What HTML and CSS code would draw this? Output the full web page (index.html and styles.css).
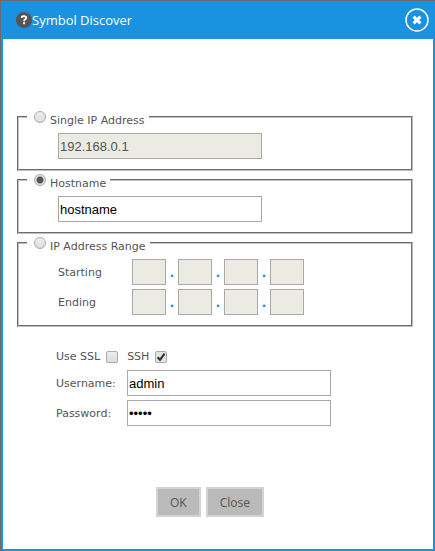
FILE: index.html
```html
<!DOCTYPE html>
<html lang="en">

<head>
    <meta charset="UTF-8">
    <meta name="viewport" content="width=device-width, initial-scale=1.0">
    <title>Symbol Discover</title>
    <link rel="stylesheet" href="styles.css">
</head>

<body>
    <div class="dialog">
        <div class="title-bar">
            <svg class="help" viewBox="0 0 16 16" aria-hidden="true">
                <circle cx="8" cy="8" r="8" fill="#555" />
                <path d="M5.8 6.1V5.4Q5.8 4.1 8 4.1Q10.2 4.1 10.2 5.8Q10.2 6.9 8.9 7.5Q8.1 7.9 8.1 9.2" fill="none" stroke="#fff" stroke-width="1.9" />
                <path d="M7.1 10.2h2v2h-2z" fill="#fff" />
            </svg>
            <h1>Symbol Discover</h1>
            <button type="button" class="close" aria-label="Close dialog">
                <svg viewBox="0 0 24 24" aria-hidden="true">
                    <circle cx="12" cy="12" r="11" fill="none" stroke="#fff" stroke-width="1.5" />
                    <path d="M8.6 8.6l6.8 6.8M15.4 8.6l-6.8 6.8" fill="none" stroke="#fff" stroke-width="3" />
                </svg>
            </button>
        </div>

        <form class="content">
            <fieldset>
                <legend>
                    <input type="radio" name="mode" id="single">
                    <label for="single">Single IP Address</label>
                </legend>
                <input type="text" class="text" value="192.168.0.1" aria-label="Single IP Address" disabled>
            </fieldset>

            <fieldset>
                <legend>
                    <input type="radio" name="mode" id="host" checked>
                    <label for="host">Hostname</label>
                </legend>
                <input type="text" class="text" value="hostname" aria-label="Hostname">
            </fieldset>

            <fieldset>
                <legend>
                    <input type="radio" name="mode" id="range">
                    <label for="range">IP Address Range</label>
                </legend>
                <div class="range">
                    <div class="range-row">
                        <label for="start1">Starting</label>
                        <input type="text" class="text octet" id="start1" disabled>
                        <span class="dot">.</span>
                        <input type="text" class="text octet" aria-label="Starting 2" disabled>
                        <span class="dot">.</span>
                        <input type="text" class="text octet" aria-label="Starting 3" disabled>
                        <span class="dot">.</span>
                        <input type="text" class="text octet" aria-label="Starting 4" disabled>
                    </div>
                    <div class="range-row">
                        <label for="end1">Ending</label>
                        <input type="text" class="text octet" id="end1" disabled>
                        <span class="dot">.</span>
                        <input type="text" class="text octet" aria-label="Ending 2" disabled>
                        <span class="dot">.</span>
                        <input type="text" class="text octet" aria-label="Ending 3" disabled>
                        <span class="dot">.</span>
                        <input type="text" class="text octet" aria-label="Ending 4" disabled>
                    </div>
                </div>
            </fieldset>

            <div class="login">
                <div class="checks">
                    <label for="ssl">Use SSL</label>
                    <input type="checkbox" id="ssl">
                    <label for="ssh" class="ssh">SSH</label>
                    <input type="checkbox" id="ssh" checked>
                </div>
                <div class="login-row">
                    <label for="user">Username:</label>
                    <input type="text" class="text" id="user" value="admin">
                </div>
                <div class="login-row">
                    <label for="pass">Password:</label>
                    <input type="password" class="text" id="pass" value="admin">
                </div>
            </div>

            <div class="buttons">
                <button type="button">OK</button>
                <button type="button">Close</button>
            </div>
        </form>
    </div>
</body>

</html>
```

FILE: styles.css
```css
* {
    box-sizing: border-box;
    margin: 0;
    padding: 0;
}

body {
    min-height: 100vh;
    display: flex;
    border-top: 1px solid #6b6b6b;
    border-left: 1px solid #6b6b6b;
    font: 11px "DejaVu Sans", sans-serif;
    color: #555;
}

.dialog {
    flex: 1;
    background: #fff;
    border: 2px solid #1a92e0;
    border-top: 0;
}

.title-bar {
    display: flex;
    align-items: center;
    height: 38px;
    padding: 0 4px 0 13px;
    background: #1a92e0;
    color: #fff;
}

.title-bar h1 {
    flex: 1;
    font: 13px "Open Sans", sans-serif;
}

.help {
    width: 16px;
    height: 16px;
}

.close {
    width: 24px;
    height: 24px;
    border: 0;
    background: none;
    cursor: pointer;
}

.close svg {
    display: block;
}

.content {
    padding: 69px 20px 0 14px;
}

fieldset {
    min-width: 0;
    padding: 7px 39px 10px;
    border: 2px groove #c0c0c0;
}

legend {
    display: flex;
    align-items: center;
    gap: 4px;
    height: 18px;
    margin-left: -31px;
    padding: 0 4px 0 7px;
}

legend label {
    padding-top: 6px;
}

input[type="radio"],
input[type="checkbox"] {
    appearance: none;
    width: 12px;
    height: 12px;
    border: 1px solid #aaa;
    border-radius: 2px;
    background: linear-gradient(#eee, #dcdcdc);
}

input[type="radio"] {
    border-radius: 50%;
}

input[type="radio"]:checked {
    background: radial-gradient(circle, #555 0 3px, #e4e4e4 4px);
}

input[type="checkbox"]:checked {
    background: url("data:image/svg+xml,%3Csvg xmlns='http://www.w3.org/2000/svg' viewBox='0 0 10 10'%3E%3Cpath d='M1.6 5.2l2.4 2.6L8.6 1.6' fill='none' stroke='%23333' stroke-width='2.2'/%3E%3C/svg%3E"), #e4e4e4;
}

.text {
    display: block;
    width: 204px;
    height: 26px;
    padding: 0 1px;
    border: 1px solid #a9a9a9;
    background: #fff;
    color: #000;
    font: 13px "Liberation Sans", sans-serif;
}

.text:disabled {
    background: #ebebe4;
    color: #555;
}

.octet {
    width: 34px;
}

.range {
    display: grid;
    gap: 4px;
}

.range-row {
    display: flex;
    align-items: center;
}

.range-row label {
    width: 74px;
}

.dot {
    width: 12px;
    text-align: center;
    font-size: 13px;
    font-weight: bold;
    color: #1a92e0;
}

.login {
    display: grid;
    gap: 4px;
    padding: 20px 0 0 39px;
}

.checks {
    display: flex;
    align-items: center;
    gap: 6px;
    height: 19px;
}

.ssh {
    margin-left: 3px;
}

.login-row {
    display: flex;
    align-items: center;
}

.login-row label {
    width: 71px;
}

.buttons {
    display: flex;
    justify-content: center;
    gap: 5px;
    padding: 61px 10px 30px 0;
}

.buttons button {
    height: 30px;
    padding: 0 12px;
    border: 2px solid #d3d3d3;
    background: #bababa;
    color: #555;
    font: 12px "Open Sans", sans-serif;
    cursor: pointer;
}
```
